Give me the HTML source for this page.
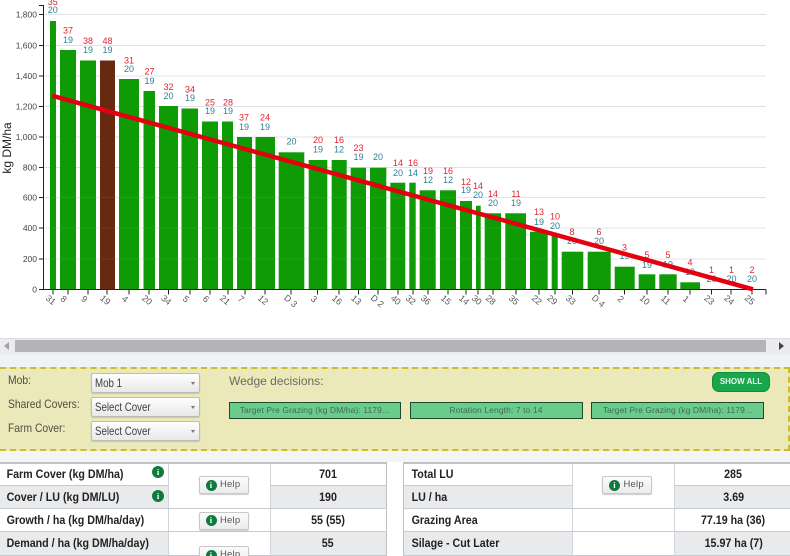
<!DOCTYPE html>
<html><head><meta charset="utf-8"><title>Feed Wedge</title>
<style>
html,body{margin:0;padding:0;background:#fff}
body{width:790px;height:556px;overflow:hidden;position:relative;font-family:"Liberation Sans",sans-serif}
#root{position:absolute;left:0;top:0;width:790px;height:556px;overflow:hidden;background:#fff;filter:blur(.35px)}
svg{position:absolute;left:0;top:0}
.r text{fill:#e2222e}.b text{fill:#2f7f95}
.abs{position:absolute;white-space:nowrap}
#sb{left:0;top:338px;width:790px;height:16px;background:#ececf0;border-top:1px solid #dcdcdf;box-sizing:border-box}
#thumb{left:15px;top:340px;width:751px;height:12px;background:#b3b4b8}
.arr{width:0;height:0;border-top:4px solid transparent;border-bottom:4px solid transparent;top:342px}
#gap{left:0;top:354px;width:790px;height:13px;background:#f1f2f5}
#panel{left:0;top:367px;width:790px;height:84px;box-sizing:border-box;background:#ebe9ba;border-top:2px dashed #c9bd32;border-bottom:2px dashed #c9bd32;border-right:2px dashed #c9bd32}
#gap2{left:0;top:451px;width:790px;height:11px;background:#f3f4f3}
.lab{font-size:12px;color:#4d4d46;transform:scaleX(.86);transform-origin:left center;line-height:14px}
.sel{left:90.5px;width:109px;height:20px;box-sizing:border-box;border:1px solid #bdbdb8;border-radius:2px;background:linear-gradient(#fff,#e8e8e8);box-shadow:0 1px 1px rgba(0,0,0,.15);font-size:12px;color:#3d3d3d;line-height:19px;padding-left:3.5px}
.sel span{display:inline-block;transform:scaleX(.81);transform-origin:left center}
.sel i{position:absolute;right:4px;top:8px;width:0;height:0;border-left:2.5px solid transparent;border-right:2.5px solid transparent;border-top:3px solid #777}
.dec{top:402px;height:17px;box-sizing:border-box;border:1px solid #1d4a2f;background:#69cc8d;color:#3f6b50;font-size:8.5px;line-height:15px;text-align:center;letter-spacing:.1px;overflow:hidden}
#show{left:712px;top:372px;width:58px;height:20px;box-sizing:border-box;background:#19a74b;border:1px solid #128a3b;border-radius:7px;color:#e9f7ee;font-size:8px;font-weight:bold;line-height:18px;text-align:center}
table{position:absolute;top:462px;border-collapse:collapse;table-layout:fixed;font-size:12px;font-weight:bold;color:#222;background:#fff}
td{padding:0;border-top:1px solid #c6c9ce;border-bottom:1px solid #c6c9ce;overflow:visible;white-space:nowrap}
tr:first-child td{border-top:2px solid #bfc2c9}
td.c{border-left:1px solid #d0d3d7;border-right:1px solid #d0d3d7;background:#fff}
td.v{text-align:center}
td.g{background:#e9eaeb}
td span{display:inline-block;transform:scaleX(.89)}
td.l span{transform-origin:left center;padding-left:8.5px}
.t1 td.v{border-right:1px solid #bcc0c6}
.t2 td.l{border-left:1px solid #bcc0c6}
.r1{height:22px}.r2{height:23px}.r3{height:23px}.r4{height:24px}
.help{width:50px;height:18px;box-sizing:border-box;background:linear-gradient(#fbfbfb,#ececec);border:1px solid #c8c8c8;border-radius:2px;box-shadow:0 1px 1px rgba(0,0,0,.2);font-size:9.5px;color:#555;line-height:16px;letter-spacing:.2px;padding-left:20.5px}
.ic{position:absolute;border-radius:50%;background:#0e7a3d;color:#fff;font:bold 8.5px/12px "Liberation Serif",serif;text-align:center;width:12px;height:12px}
.help .ic{left:6px;top:2.5px;width:11px;height:11px;line-height:11px}
</style></head><body><div id="root">
<svg width="790" height="338" viewBox="0 0 790 338" font-family="Liberation Sans, sans-serif">
<g stroke="#dfe3e6" stroke-width="1" fill="none"><path d="M44 14.5H766M44 45.5H766M44 76H766M44 106.5H766M44 137H766M44 167.5H766M44 197.5H766M44 228H766M44 259H766"/></g>
<g fill="#0e9b06">
<rect x="50" y="21" width="6" height="268.5"/><rect x="60" y="50" width="16" height="239.5"/><rect x="80" y="60.5" width="16" height="229"/>
<rect x="100" y="60.5" width="15" height="229" fill="#672a10"/>
<rect x="119" y="79" width="20" height="210.5"/><rect x="143.5" y="91" width="11.5" height="198.5"/><rect x="159" y="106" width="19" height="183.5"/><rect x="181.5" y="108.5" width="16.5" height="181"/><rect x="202" y="121.5" width="16" height="168"/><rect x="222" y="121.5" width="11" height="168"/><rect x="237" y="137" width="15" height="152.5"/><rect x="255.5" y="137" width="19.5" height="152.5"/>
<rect x="278.7" y="152.3" width="25.6" height="137.2"/><rect x="308.7" y="160" width="18.6" height="129.5"/><rect x="331.7" y="160" width="15" height="129.5"/><rect x="350.7" y="167.7" width="15.3" height="121.8"/><rect x="370" y="167.7" width="16.3" height="121.8"/><rect x="390.3" y="182.7" width="15" height="106.8"/><rect x="409.3" y="182.7" width="6.4" height="106.8"/><rect x="419.7" y="190.3" width="16" height="99.2"/><rect x="440" y="190.3" width="16" height="99.2"/><rect x="460" y="201" width="12" height="88.5"/><rect x="476" y="205.7" width="4.7" height="83.8"/><rect x="484.7" y="213.3" width="16.3" height="76.2"/><rect x="505.3" y="213.3" width="20.7" height="76.2"/>
<rect x="530" y="231.7" width="17.7" height="57.8"/><rect x="551.7" y="235.7" width="6" height="53.8"/><rect x="561.7" y="251.7" width="21.6" height="37.8"/><rect x="587.7" y="251.7" width="23" height="37.8"/><rect x="614.7" y="266.7" width="20" height="22.8"/><rect x="638.7" y="274.3" width="16.6" height="15.2"/><rect x="659.3" y="274.3" width="17.4" height="15.2"/><rect x="680.3" y="282.3" width="19.7" height="7.2"/>
</g>
<path d="M44 197.5H560M44 228H560M44 259H560" stroke="#fff" stroke-opacity=".07" fill="none"/>
<path d="M43.5 5V289.5H766M39 5.5H43.5M39 14.5H43.5M39 45.5H43.5M39 76H43.5M39 106.5H43.5M39 137H43.5M39 167.5H43.5M39 197.5H43.5M39 228H43.5M39 259H43.5M39 289.5H43.5M53 289.5v5M68 289.5v5M88 289.5v5M107 289.5v5M129 289.5v5M149 289.5v5M168.5 289.5v5M190 289.5v5M210 289.5v5M228 289.5v5M245 289.5v5M265 289.5v5M291 289.5v5M317.5 289.5v5M339 289.5v5M358.5 289.5v5M378 289.5v5M398 289.5v5M413 289.5v5M428 289.5v5M448 289.5v5M466 289.5v5M478 289.5v5M493 289.5v5M516 289.5v5M539 289.5v5M555 289.5v5M572.5 289.5v5M599 289.5v5M624.5 289.5v5M647 289.5v5M668 289.5v5M690 289.5v5M711.5 289.5v5M731 289.5v5M752 289.5v5M766 289.5v5" stroke="#222" stroke-width="1" fill="none"/>
<g font-size="8.5" fill="#444" text-anchor="end">
<text x="37" y="17.5">1,800</text><text x="37" y="48.5">1,600</text><text x="37" y="79">1,400</text><text x="37" y="109.5">1,200</text><text x="37" y="140">1,000</text><text x="37" y="170.5">800</text><text x="37" y="200.5">600</text><text x="37" y="231">400</text><text x="37" y="262">200</text><text x="37" y="292.5">0</text>
</g>
<text transform="translate(11,148) rotate(-90)" font-size="12" fill="#222" text-anchor="middle">kg DM/ha</text>
<g font-size="9" fill="#5a5a5a" text-anchor="middle">
<text transform="translate(50.7,300) rotate(40)" y="3">31</text><text transform="translate(63.7,299) rotate(40)" y="3">8</text><text transform="translate(84.3,299) rotate(40)" y="3">9</text><text transform="translate(105.3,300) rotate(40)" y="3">19</text><text transform="translate(125,299) rotate(40)" y="3">4</text><text transform="translate(147,300) rotate(40)" y="3">20</text><text transform="translate(166.3,300) rotate(40)" y="3">34</text><text transform="translate(186,299) rotate(40)" y="3">5</text><text transform="translate(206,299) rotate(40)" y="3">6</text><text transform="translate(225,300) rotate(40)" y="3">21</text><text transform="translate(241,299) rotate(40)" y="3">7</text><text transform="translate(263,300) rotate(40)" y="3">12</text>
<text transform="translate(290.7,301) rotate(40)" y="3">D 3</text><text transform="translate(314,299) rotate(40)" y="3">3</text><text transform="translate(337,300) rotate(40)" y="3">16</text><text transform="translate(356.3,300) rotate(40)" y="3">13</text><text transform="translate(377.3,301) rotate(40)" y="3">D 2</text><text transform="translate(395.7,300) rotate(40)" y="3">40</text><text transform="translate(410.7,300) rotate(40)" y="3">32</text><text transform="translate(425.7,300) rotate(40)" y="3">36</text><text transform="translate(446,300) rotate(40)" y="3">15</text><text transform="translate(464,300) rotate(40)" y="3">14</text><text transform="translate(476.7,300) rotate(40)" y="3">30</text><text transform="translate(490.7,300) rotate(40)" y="3">28</text><text transform="translate(513.7,300) rotate(40)" y="3">35</text>
<text transform="translate(536.7,300) rotate(40)" y="3">22</text><text transform="translate(552.3,300) rotate(40)" y="3">29</text><text transform="translate(570.7,300) rotate(40)" y="3">33</text><text transform="translate(598.3,301) rotate(40)" y="3">D 4</text><text transform="translate(620.7,299) rotate(40)" y="3">2</text><text transform="translate(644.7,300) rotate(40)" y="3">10</text><text transform="translate(665.7,300) rotate(40)" y="3">11</text><text transform="translate(686,299) rotate(40)" y="3">1</text><text transform="translate(709.3,300) rotate(40)" y="3">23</text><text transform="translate(729.3,300) rotate(40)" y="3">24</text><text transform="translate(749.7,300) rotate(40)" y="3">25</text>
</g>
<g class="r" font-size="9" text-anchor="middle">
<text x="52.7" y="5">35</text><text x="68" y="33.5">37</text><text x="88" y="44">38</text><text x="107.5" y="44">48</text><text x="129" y="63.5">31</text><text x="149.5" y="74.5">27</text><text x="168.5" y="90">32</text><text x="190" y="92.5">34</text><text x="210" y="105.5">25</text><text x="228" y="105.5">28</text><text x="244" y="120.5">37</text><text x="265" y="120.5">24</text><text x="318" y="143">20</text><text x="339" y="143">16</text><text x="358.5" y="151">23</text><text x="398" y="166">14</text><text x="413" y="166">16</text><text x="428" y="174">19</text><text x="448" y="174">16</text><text x="466" y="185">12</text><text x="478" y="189">14</text><text x="493" y="197">14</text><text x="516" y="197">11</text><text x="539" y="215">13</text><text x="555" y="219.5">10</text><text x="572" y="235">8</text><text x="599" y="235">6</text><text x="624.5" y="250.5">3</text><text x="647" y="258">5</text><text x="668" y="258">5</text><text x="690" y="265.5">4</text><text x="711.5" y="273">1</text><text x="731.5" y="273">1</text><text x="752" y="273">2</text>
</g>
<g class="b" font-size="9" text-anchor="middle">
<text x="52.7" y="13">20</text><text x="68" y="43">19</text><text x="88" y="53">19</text><text x="107.5" y="53">19</text><text x="129" y="72">20</text><text x="149.5" y="84">19</text><text x="168.5" y="99">20</text><text x="190" y="101">19</text><text x="210" y="114">19</text><text x="228" y="114">19</text><text x="244" y="130">19</text><text x="265" y="130">19</text><text x="291.5" y="144.7">20</text><text x="318" y="152.7">19</text><text x="339" y="152.7">12</text><text x="358.5" y="160">19</text><text x="378" y="160">20</text><text x="398" y="176">20</text><text x="413" y="176">14</text><text x="428" y="183">12</text><text x="448" y="183">12</text><text x="466" y="193">19</text><text x="478" y="198">20</text><text x="493" y="206">20</text><text x="516" y="206">19</text><text x="539" y="225">19</text><text x="555" y="229">20</text><text x="572" y="244">20</text><text x="599" y="244">20</text><text x="624.5" y="259">19</text><text x="647" y="268">19</text><text x="668" y="267.5">19</text><text x="690" y="275">19</text><text x="711.5" y="282">20</text><text x="731.5" y="282">20</text><text x="752" y="282">20</text>
</g>
<path d="M52 95.7L753 289.3" stroke="#e4000f" stroke-width="4.5" fill="none"/>
</svg>

<div class="abs" id="sb"></div>
<div class="abs" id="thumb"></div>
<div class="abs arr" style="left:4px;border-right:5px solid #a2a2a8"></div>
<div class="abs arr" style="left:779px;border-left:5px solid #444"></div>
<div class="abs" id="gap"></div>
<div class="abs" id="panel"></div>
<div class="abs" id="gap2"></div>

<div class="abs lab" style="left:8px;top:373px">Mob:</div>
<div class="abs lab" style="left:8px;top:397px">Shared Covers:</div>
<div class="abs lab" style="left:8px;top:421px">Farm Cover:</div>
<div class="abs sel" style="top:373px"><span>Mob 1</span><i></i></div>
<div class="abs sel" style="top:397px"><span>Select Cover</span><i></i></div>
<div class="abs sel" style="top:421px"><span>Select Cover</span><i></i></div>
<div class="abs" style="left:229px;top:374px;font-size:12px;color:#6a6a60;line-height:14px">Wedge decisions:</div>
<div class="abs" id="show">SHOW ALL</div>
<div class="abs dec" style="left:228.5px;width:172px">Target Pre Grazing (kg DM/ha): 1179...</div>
<div class="abs dec" style="left:409.5px;width:173px">Rotation Length: 7 to 14</div>
<div class="abs dec" style="left:591px;width:173px">Target Pre Grazing (kg DM/ha): 1179...</div>

<table class="t1" style="left:-1px;width:387px"><colgroup><col style="width:169px"><col style="width:102px"><col style="width:116px"></colgroup>
<tr class="r1"><td class="l"><span>Farm Cover (kg DM/ha)</span></td><td class="c" rowspan="2"></td><td class="v"><span>701</span></td></tr>
<tr class="r2"><td class="l g"><span>Cover / LU (kg DM/LU)</span></td><td class="v g"><span>190</span></td></tr>
<tr class="r3"><td class="l"><span>Growth / ha (kg DM/ha/day)</span></td><td class="c"></td><td class="v"><span>55 (55)</span></td></tr>
<tr class="r4"><td class="l g"><span>Demand / ha (kg DM/ha/day)</span></td><td class="c"></td><td class="v g"><span>55</span></td></tr>
</table>
<table class="t2" style="left:403px;width:388px"><colgroup><col style="width:169px"><col style="width:102px"><col style="width:117px"></colgroup>
<tr class="r1"><td class="l"><span>Total LU</span></td><td class="c" rowspan="2"></td><td class="v"><span>285</span></td></tr>
<tr class="r2"><td class="l g"><span>LU / ha</span></td><td class="v g"><span>3.69</span></td></tr>
<tr class="r3"><td class="l"><span>Grazing Area</span></td><td class="c"></td><td class="v"><span>77.19 ha (36)</span></td></tr>
<tr class="r4"><td class="l g"><span>Silage - Cut Later</span></td><td class="c"></td><td class="v g"><span>15.97 ha (7)</span></td></tr>
</table>

<div class="ic" style="left:152px;top:466px">i</div>
<div class="ic" style="left:152px;top:490px">i</div>
<div class="abs help" style="left:198.5px;top:476px"><b class="ic">i</b>Help</div>
<div class="abs help" style="left:198.5px;top:511.5px"><b class="ic">i</b>Help</div>
<div class="abs help" style="left:198.5px;top:546px"><b class="ic">i</b>Help</div>
<div class="abs help" style="left:602px;top:476px"><b class="ic">i</b>Help</div>
</div></body></html>
